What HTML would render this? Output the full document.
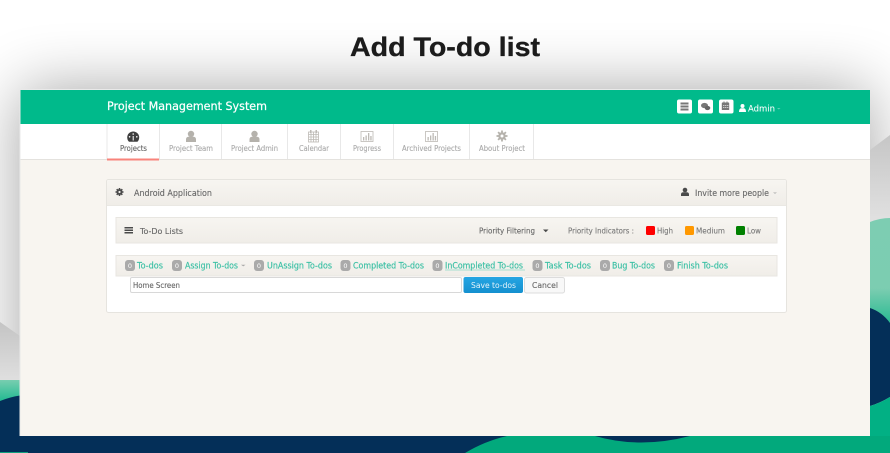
<!DOCTYPE html>
<html><head><meta charset="utf-8"><title>Add To-do list</title>
<style>
html,body{margin:0;padding:0;background:#fff;width:890px;height:453px;overflow:hidden}
svg{display:block}
text{font-family:"DejaVu Sans","Liberation Sans",sans-serif;font-size:8px;fill:#666;stroke:#666;stroke-width:.12}
.t{font-family:"Liberation Sans",sans-serif;font-weight:bold;font-size:27px;fill:#1a1a1a;stroke:#1a1a1a;stroke-width:.3}
.l{fill:#3cc0a5;stroke:#3cc0a5;stroke-width:.18;font-size:8.500px}
.n{fill:#aaa;stroke:#aaa;font-size:7.500px}
.b{fill:#fff;stroke:none;font-size:6.500px;text-anchor:middle}
.w{fill:#fff;stroke:#fff;stroke-width:.22}
.g{fill:#777;stroke:#777}
</style></head><body>
<svg width="890" height="453" viewBox="0 0 890 453" xmlns="http://www.w3.org/2000/svg">
<defs>
<filter id="sh" x="-30%" y="-60%" width="160%" height="220%"><feGaussianBlur stdDeviation="32"/></filter>
<filter id="sf" x="-5%" y="-5%" width="110%" height="110%"><feGaussianBlur stdDeviation="0.28"/></filter>
<linearGradient id="gl" x1="0" y1="0" x2="0" y2="1"><stop offset="0" stop-color="#c4c4c4"/><stop offset="1" stop-color="#e0e0e0"/></linearGradient>
<linearGradient id="gr" x1="0" y1="0" x2="0" y2="1"><stop offset="0" stop-color="#c6c6c6"/><stop offset="1" stop-color="#e2e2e2"/></linearGradient>
<linearGradient id="gg" x1="0" y1="0" x2="0" y2="1"><stop offset="0" stop-color="#78ceb0"/><stop offset="1" stop-color="#12b68c"/></linearGradient>
<linearGradient id="gg2" x1="0" y1="0" x2="0" y2="1"><stop offset="0" stop-color="#7dcdb2"/><stop offset=".6" stop-color="#7ccdb1"/><stop offset="1" stop-color="#0cb487"/></linearGradient>
<linearGradient id="hd" x1="0" y1="0" x2="0" y2="1"><stop offset="0" stop-color="#f7f5f1"/><stop offset="1" stop-color="#f0ede8"/></linearGradient>
<linearGradient id="bl" x1="0" y1="0" x2="0" y2="1"><stop offset="0" stop-color="#25a5e3"/><stop offset="1" stop-color="#1590cf"/></linearGradient>
</defs>

<rect width="890" height="453" fill="#fff"/>
<rect x="20" y="90" width="850" height="346" fill="#000" opacity=".36" filter="url(#sh)"/>
<polygon points="0,322 20,336 20,382 0,382" fill="url(#gl)"/>
<polygon points="870,150 890,135 890,225 870,225" fill="url(#gr)"/>

<!-- left waves -->
<rect x="0" y="380" width="20" height="25" fill="url(#gg)"/>
<path d="M0 401 Q10 397 20 395.500 V453 H0Z" fill="#042f58"/>
<!-- right waves -->
<path d="M870 222 Q880 218 890 218 V335 H870Z" fill="url(#gg2)"/>
<path d="M870 308 Q882 312 890 323 V397 Q880 403 870 406Z" fill="#042f58"/>
<path d="M870 406 Q880 403 890 397 V453 H870Z" fill="#02b084"/>
<!-- bottom -->
<rect x="0" y="436" width="890" height="17" fill="#042f58"/>
<rect x="0" y="452" width="28" height="1" fill="#10a080"/>
<path d="M465 453 Q485 441 507 436 H595 Q640 449 690 436 H890 V453Z" fill="#02a97c"/>

<!-- panel -->
<rect x="19.500" y="89" width="850.500" height="347" fill="#e9e9e9"/>
<rect x="20.500" y="90" width="849.500" height="346" fill="#f8f5f0"/>
<rect x="20.500" y="90" width="849.500" height="34" fill="#00ba8b"/>
<rect x="20.500" y="124" width="849.500" height="35" fill="#fff"/>
<rect x="20.500" y="159" width="849.500" height="1" fill="#e4e2de"/>

<!-- tab separators -->
<g fill="#e8e8e8">
<rect x="106.500" y="124" width="1" height="35"/>
<rect x="159" y="124" width="1" height="35"/>
<rect x="221" y="124" width="1" height="35"/>
<rect x="287" y="124" width="1" height="35"/>
<rect x="340" y="124" width="1" height="35"/>
<rect x="393" y="124" width="1" height="35"/>
<rect x="469" y="124" width="1" height="35"/>
<rect x="533" y="124" width="1" height="35"/>
</g>
<rect x="107" y="158.500" width="52" height="2" fill="#f8837b"/>

<!-- card -->
<rect x="106.500" y="179.500" width="680" height="133" rx="2" fill="#fff" stroke="#e6e4df"/>
<path d="M107 205 V181.500 Q107 180 109 180 H784 Q786 180 786 181.500 V205Z" fill="url(#hd)"/>
<rect x="107" y="205" width="679" height="1" fill="#eae8e3"/>

<rect x="116" y="217.500" width="661" height="25.500" fill="url(#hd)" stroke="#e8e6e1" stroke-width="1"/>
<rect x="116" y="255.500" width="661" height="20.500" fill="url(#hd)" stroke="#e8e6e1" stroke-width="1"/>

<!-- input + buttons -->
<rect x="130.500" y="277.500" width="331" height="15" rx="1.500" fill="#fff" stroke="#d8d8d8"/>
<rect x="463.500" y="277" width="59.500" height="16" rx="2" fill="url(#bl)"/>
<rect x="524.500" y="277.500" width="40" height="15.500" rx="2" fill="#f8f8f8" stroke="#dcdcdc"/>

<!-- priority squares -->
<rect x="646" y="226" width="9" height="9" rx="1.500" fill="#fe0000"/>
<rect x="685" y="226" width="9" height="9" rx="1.500" fill="#ff9800"/>
<rect x="736" y="226" width="9" height="9" rx="1.500" fill="#008000"/>

<!-- badges -->
<g fill="#aaa">
<rect x="125" y="260" width="10" height="11" rx="3"/>
<rect x="172" y="260" width="10" height="11" rx="3"/>
<rect x="254" y="260" width="10" height="11" rx="3"/>
<rect x="340.500" y="260" width="10" height="11" rx="3"/>
<rect x="432.500" y="260" width="10" height="11" rx="3"/>
<rect x="532.500" y="260" width="10" height="11" rx="3"/>
<rect x="600" y="260" width="10" height="11" rx="3"/>
<rect x="664" y="260" width="10" height="11" rx="3"/>
</g>
<rect x="445" y="269.500" width="80" height="1" fill="#a5dfd0"/>

<!-- header buttons -->
<rect x="677" y="99.500" width="15" height="14" rx="2" fill="#fff"/>
<rect x="698" y="99.500" width="15" height="14" rx="2" fill="#fff"/>
<rect x="719" y="99.500" width="14.500" height="14" rx="2" fill="#fff"/>

<!-- header icons -->
<g fill="#777">
<rect x="680.500" y="102.500" width="8" height="2"/><rect x="680.500" y="105.500" width="8" height="2"/><rect x="680.500" y="108.500" width="8" height="2"/>
<ellipse cx="704.500" cy="105.500" rx="3.500" ry="2.600"/><ellipse cx="707.500" cy="108" rx="2.800" ry="2.100" fill="#666"/>
<path d="M722.500 102.500h1v-1h1v1h2v-1h1v1h1a.7.7 0 0 1 .7.7v6.800h-7.400v-6.800a.7.700 0 0 1 .7-.7z M723.300 105v.9h1v-.9z M725.300 105v.9h1v-.9z M727.300 105v.9h1v-.9z M723.300 107v.9h1v-.9z M725.300 107v.9h1v-.9z M727.300 107v.9h1v-.9z" fill-rule="evenodd"/>
</g>
<g fill="#fff">
<circle cx="742.500" cy="106" r="2"/><path d="M739 112 q0-3.500 2-3.800 h3 q2 .3 2 3.800z"/>
</g>
<path d="M777 108h3.500l-1.750 1.500z" fill="#5fd3b6"/>

<!-- tab icons -->
<path d="M129 141.800 a6 6 0 1 1 8.400 0z" fill="#3e3e3e"/>
<g fill="#fff"><circle cx="129.600" cy="136.800" r=".8"/><circle cx="133.200" cy="134" r=".8"/><circle cx="136.800" cy="136.800" r=".8"/><rect x="132.700" y="136" width="1" height="4.500"/></g>
<g fill="#b5b2ac">
<circle cx="191" cy="134" r="3.200"/><path d="M186 142 v-2.500 q0-2.500 2.500-2.700 h5 q2.500 .2 2.500 2.700 v2.500z"/>
<circle cx="254.500" cy="134" r="3.200"/><path d="M249.500 142 v-2.500 q0-2.500 2.500-2.700 h5 q2.500 .2 2.500 2.700 v2.500z"/>
<!-- gear -->
<circle cx="502" cy="136" r="3.700"/>
<g stroke="#b5b2ac" stroke-width="1.800"><path d="M502 130.500v11M496.500 136h11M498.100 132.100l7.800 7.800M505.900 132.100l-7.800 7.800"/></g>
<circle cx="502" cy="136" r="1.500" fill="#fff"/>
</g>
<g fill="none" stroke="#bdbab5" stroke-width=".8">
<rect x="308.500" y="132" width="10" height="10"/>
<path d="M308.500 134.500h10M308.500 137h10M308.500 139.500h10M311 132v10M313.500 132v10M316 132v10"/>
<rect x="361" y="131.500" width="12" height="10"/>
<rect x="425.500" y="131.500" width="12" height="10"/>
</g>
<g fill="#bdbab5">
<rect x="310" y="130" width="1.500" height="3"/><rect x="315.500" y="130" width="1.500" height="3"/>
<rect x="363" y="137" width="1.300" height="3.500"/><rect x="365.500" y="135.500" width="1.300" height="5"/><rect x="368" y="133" width="1.300" height="7.500"/><rect x="370.300" y="136" width="1.300" height="4.500"/>
<rect x="427.500" y="137" width="1.300" height="3.500"/><rect x="430" y="135.500" width="1.300" height="5"/><rect x="432.500" y="133" width="1.300" height="7.500"/><rect x="434.800" y="136" width="1.300" height="4.500"/>
</g>

<!-- card icons -->
<g fill="#4a4a4a">
<circle cx="119.500" cy="192" r="3"/>
<g stroke="#4a4a4a" stroke-width="1.500"><path d="M119.500 188v8M115.500 192h8M116.700 189.200l5.600 5.600M122.300 189.200l-5.600 5.600"/></g>
<circle cx="119.500" cy="192" r="1.100" fill="#f3f1ed"/>
<circle cx="685" cy="190" r="2.300"/><path d="M681 196 v-1.500 q0-2 2-2.200 h4 q2 .2 2 2.200 v1.500z"/>
<rect x="124.500" y="227" width="8.500" height="1.500"/><rect x="124.500" y="229.500" width="8.500" height="1.500"/><rect x="124.500" y="232" width="8.500" height="1.500"/>
<path d="M543 229.500h5.500l-2.750 2.700z"/>
</g>
<path d="M773 192.500h4l-2 1.300z" fill="#aaa"/>
<path d="M241 264.800h4.500l-2.250 1.600z" fill="#aaa"/>

<g filter="url(#sf)">
<text class="t" x="350" y="56" textLength="190" lengthAdjust="spacingAndGlyphs">Add To-do list</text>
<text class="w" x="107" y="110" textLength="160" lengthAdjust="spacingAndGlyphs" style="font-size:11.500px">Project Management System</text>
<text class="w" x="748" y="111.500" textLength="27" lengthAdjust="spacingAndGlyphs" style="font-size:9px;stroke-width:.05">Admin</text>

<text x="120" y="151" textLength="27" lengthAdjust="spacingAndGlyphs" style="font-size:7.500px">Projects</text>
<text class="n" x="169" y="151" textLength="44" lengthAdjust="spacingAndGlyphs">Project Team</text>
<text class="n" x="231" y="151" textLength="47" lengthAdjust="spacingAndGlyphs">Project Admin</text>
<text class="n" x="299" y="151" textLength="30" lengthAdjust="spacingAndGlyphs">Calendar</text>
<text class="n" x="353" y="151" textLength="28" lengthAdjust="spacingAndGlyphs">Progress</text>
<text class="n" x="402" y="151" textLength="59" lengthAdjust="spacingAndGlyphs">Archived Projects</text>
<text class="n" x="479" y="151" textLength="46" lengthAdjust="spacingAndGlyphs">About Project</text>

<text x="134" y="196" textLength="78" lengthAdjust="spacingAndGlyphs" style="font-size:8.500px">Android Application</text>
<text x="695" y="196" textLength="74" lengthAdjust="spacingAndGlyphs" style="font-size:8.500px">Invite more people</text>
<text x="140" y="234" textLength="43" lengthAdjust="spacingAndGlyphs">To-Do Lists</text>
<text x="479" y="233.500" textLength="56" lengthAdjust="spacingAndGlyphs">Priority Filtering</text>
<text class="g" x="568" y="233.500" textLength="66" lengthAdjust="spacingAndGlyphs">Priority Indicators :</text>
<text class="g" x="657" y="233.500" textLength="16" lengthAdjust="spacingAndGlyphs">High</text>
<text class="g" x="696" y="233.500" textLength="29" lengthAdjust="spacingAndGlyphs">Medium</text>
<text class="g" x="747" y="233.500" textLength="14" lengthAdjust="spacingAndGlyphs">Low</text>

<text class="l" x="137" y="268.500" textLength="26" lengthAdjust="spacingAndGlyphs">To-dos</text>
<text class="l" x="185" y="268.500" textLength="53" lengthAdjust="spacingAndGlyphs">Assign To-dos</text>
<text class="l" x="267" y="268.500" textLength="65" lengthAdjust="spacingAndGlyphs">UnAssign To-dos</text>
<text class="l" x="353" y="268.500" textLength="71" lengthAdjust="spacingAndGlyphs">Completed To-dos</text>
<text class="l" x="445" y="268.500" textLength="78" lengthAdjust="spacingAndGlyphs">InCompleted To-dos</text>
<text class="l" x="545" y="268.500" textLength="46" lengthAdjust="spacingAndGlyphs">Task To-dos</text>
<text class="l" x="612" y="268.500" textLength="43" lengthAdjust="spacingAndGlyphs">Bug To-dos</text>
<text class="l" x="677" y="268.500" textLength="51" lengthAdjust="spacingAndGlyphs">Finish To-dos</text>

<text class="b" x="130" y="268">0</text>
<text class="b" x="177" y="268">0</text>
<text class="b" x="259" y="268">0</text>
<text class="b" x="345.500" y="268">0</text>
<text class="b" x="437.500" y="268">0</text>
<text class="b" x="537.500" y="268">0</text>
<text class="b" x="605" y="268">0</text>
<text class="b" x="669" y="268">0</text>

<text x="133" y="288" textLength="47" lengthAdjust="spacingAndGlyphs" style="font-size:7.500px">Home Screen</text>
<text x="471" y="288" textLength="45" lengthAdjust="spacingAndGlyphs" style="font-size:8px;fill:#e6f4fb;stroke:none">Save to-dos</text>
<text x="532" y="288" textLength="26" lengthAdjust="spacingAndGlyphs" style="font-size:8px">Cancel</text>
</g>
</svg>
</body></html>
